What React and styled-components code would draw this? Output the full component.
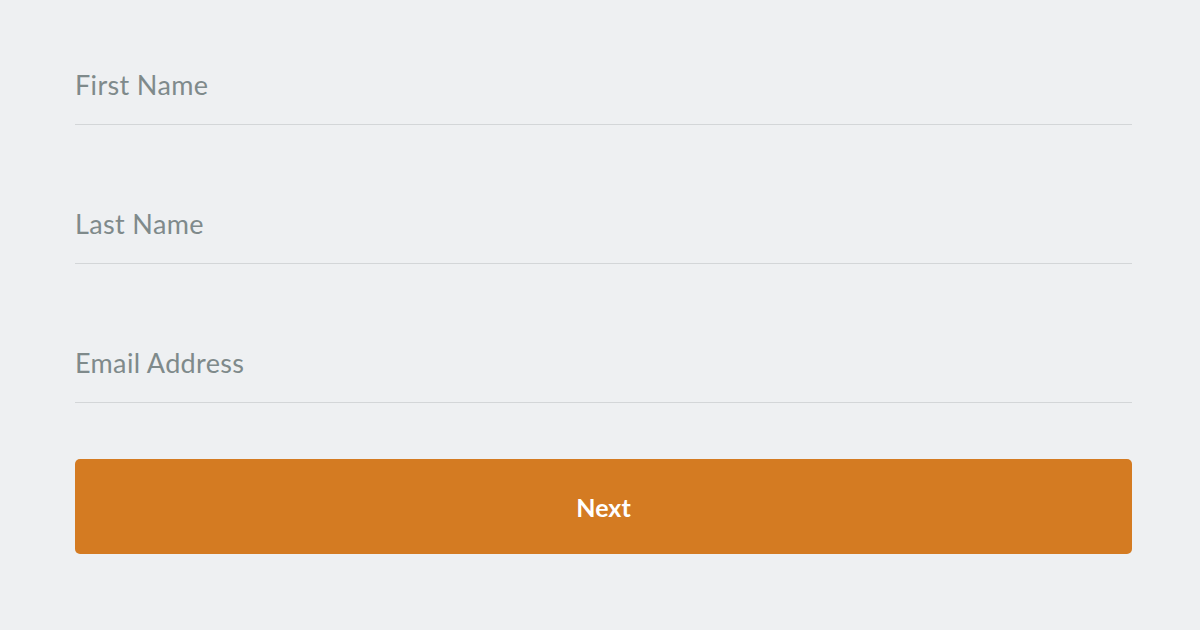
import React from 'react'
import styled, { createGlobalStyle } from 'styled-components'

const GlobalStyle = createGlobalStyle`
    html, body {
        margin: 0;
        padding: 0;
        background: #eef0f2;
        font-family: Lato, "Open Sans", sans-serif;
    }
`;

const Page = styled.div`
    width: 1200px;
    height: 630px;
    box-sizing: border-box;
    padding: 61px 68px 0 75px;
    background: #eef0f2;
`;

const Form = styled.form`
    display: flex;
    flex-direction: column;
    gap: 75px;
`;

const Input = styled.input`
    display: block;
    width: 100%;
    box-sizing: border-box;
    height: 64px;
    padding: 8px 0 24px;
    border: none;
    border-bottom: 1px solid #d3d6d8;
    background: transparent;
    font-family: Lato, "Open Sans", sans-serif;
    font-size: 27px;
    letter-spacing: 0.35px;
    line-height: 30px;
    color: #5f6b6b;
    outline: none;
    &::placeholder {
        color: #7f8a8b;
    }
`;

const Button = styled.button`
    margin-top: -19px;
    height: 95px;
    width: 100%;
    border: none;
    border-radius: 5px;
    background: #d47b22;
    color: #fff;
    font-family: Lato, "Open Sans", sans-serif;
    font-size: 25px;
    font-weight: 700;
    padding: 0;
    cursor: pointer;
`;

function App() {
    return (
        <Page>
            <GlobalStyle />
            <Form onSubmit={(e) => e.preventDefault()}>
                <Input placeholder="First Name" />
                <Input placeholder="Last Name" />
                <Input placeholder="Email Address" />
                <Button type="submit">Next</Button>
            </Form>
        </Page>
    )
}

export default App
